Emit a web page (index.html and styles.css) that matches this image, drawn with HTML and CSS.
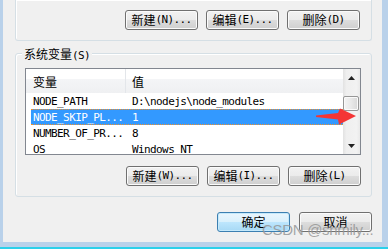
FILE: index.html
```html
<!DOCTYPE html>
<html lang="zh-CN">
<head>
    <meta charset="UTF-8">
    <title>环境变量</title>
    <link rel="stylesheet" href="styles.css">
</head>
<body>
    <div class="screen">
        <div class="window">
            <div class="group group-top">
                <div class="btn-row">
                    <button class="btn"><span class="zh">新建</span>(N)...</button>
                    <button class="btn"><span class="zh">编辑</span>(E)...</button>
                    <button class="btn"><span class="zh">删除</span>(D)</button>
                </div>
            </div>

            <fieldset class="group">
                <legend><span class="zh">系统变量</span>(S)</legend>
                <div class="list">
                    <div class="list-main">
                        <div class="list-head">
                            <div class="hcol hcol-name zh">变量</div>
                            <div class="hcol zh">值</div>
                        </div>
                        <div class="row">
                            <span class="cell-name">NODE_PATH</span>
                            <span class="cell-value">D:\nodejs\node_modules</span>
                        </div>
                        <div class="row selected">
                            <span class="cell-name">NODE_SKIP_PL...</span>
                            <span class="cell-value">1</span>
                        </div>
                        <div class="row">
                            <span class="cell-name">NUMBER_OF_PR...</span>
                            <span class="cell-value">8</span>
                        </div>
                        <div class="row">
                            <span class="cell-name">OS</span>
                            <span class="cell-value">Windows_NT</span>
                        </div>
                    </div>
                    <div class="scrollbar">
                        <div class="sb-btn">
                            <svg width="7" height="4" viewBox="0 0 7 4"><polygon points="3.5,0 7,4 0,4" fill="#222"/></svg>
                        </div>
                        <div class="sb-track">
                            <div class="sb-thumb"></div>
                        </div>
                        <div class="sb-btn">
                            <svg width="7" height="4" viewBox="0 0 7 4"><polygon points="0,0 7,0 3.5,4" fill="#222"/></svg>
                        </div>
                    </div>
                </div>
                <div class="btn-row btn-row-low">
                    <button class="btn"><span class="zh">新建</span>(W)...</button>
                    <button class="btn"><span class="zh">编辑</span>(I)...</button>
                    <button class="btn"><span class="zh">删除</span>(L)</button>
                </div>
            </fieldset>

            <div class="dialog-buttons">
                <button class="btn btn-default"><span class="zh">确定</span></button>
                <button class="btn"><span class="zh">取消</span></button>
            </div>
        </div>

        <!-- annotation arrow pasted on top of the screenshot -->
        <svg class="arrow" width="388" height="249" viewBox="0 0 388 249">
            <polygon points="316,115.5 338,113 340,108.5 356,116 339,124.5 338,119.5 316,117" fill="#f43535"/>
        </svg>
        <div class="watermark">CSDN @shmily...</div>
    </div>
</body>
</html>
```

FILE: styles.css
```css
* {
    box-sizing: border-box;
}
html, body {
    margin: 0;
    padding: 0;
}
body {
    width: 388px;
    height: 249px;
    overflow: hidden;
    background-color: #f0f0f0;
    font-family: "DejaVu Sans Mono", "Noto Sans CJK SC", monospace;
    font-size: 11px;
    letter-spacing: -0.6px;
    color: #000000;
}
.zh {
    font-family: "Noto Sans CJK SC", sans-serif;
    font-size: 12px;
    letter-spacing: 0;
}
.screen {
    position: relative;
    height: 249px;
    border-bottom: 2px solid #2cd0ea;
}
.window {
    height: 247px;
    background-color: #f0f0f0;
    border-left: 3px solid #b9d1ea;
    border-right: 6px solid #b9d1ea;
    border-bottom: 5px solid #b9d1ea;
    padding: 0 10px 0 12px;
    display: flex;
    flex-direction: column;
}

/* group boxes */
.group {
    border: 1px solid #d5dfe5;
    border-radius: 3px;
    box-shadow: inset 1px 1px 0 #ffffff;
}
.group-top {
    height: 41px;
    border-top: none;
    border-radius: 0 0 3px 3px;
    padding: 10px 11px 0 0;
}
fieldset.group {
    margin: 6px 0 0 0;
    padding: 8px 10px 10px 9px;
    min-width: 0;
}
fieldset.group legend {
    margin-left: -3px;
    padding: 0 2px;
    line-height: 13px;
    height: 13px;
    background-color: #f0f0f0;
}

/* buttons */
.btn-row {
    display: flex;
    justify-content: flex-end;
    gap: 8px;
}
.btn-row-low {
    margin-top: 11px;
}
.btn {
    width: 73px;
    height: 20px;
    padding: 0;
    margin: 0;
    border: 1px solid #707070;
    border-radius: 3px;
    background: linear-gradient(to bottom, #f2f2f2 0%, #ebebeb 50%, #dddddd 50%, #cfcfcf 100%);
    box-shadow: inset 0 0 0 1px #fbfbfb;
    font-family: "DejaVu Sans Mono", "Noto Sans CJK SC", monospace;
    font-size: 11px;
    letter-spacing: -0.6px;
    line-height: 18px;
    color: #000000;
    display: flex;
    align-items: center;
    justify-content: center;
}
.btn-default {
    border-color: #3c7fb1;
    background: linear-gradient(to bottom, #eaf6fd 0%, #d9f0fc 50%, #bee6fd 50%, #a7d9f5 100%);
    box-shadow: inset 0 0 0 1px #c5e9fb;
}
.dialog-buttons {
    display: flex;
    justify-content: flex-end;
    gap: 9px;
    margin-top: 15px;
}

/* list view */
.list {
    height: 87px;
    border: 1px solid #828790;
    background-color: #ffffff;
    display: flex;
    overflow: hidden;
}
.list-main {
    flex: 1;
    overflow: hidden;
}
.list-head {
    height: 24px;
    display: flex;
    background: linear-gradient(to bottom, #ffffff 0%, #ffffff 40%, #f4f5f7 40%, #eff0f2 100%);
}
.hcol {
    line-height: 24px;
    padding: 1px 0 0 6px;
}
.hcol-name {
    width: 100px;
    padding-left: 7px;
    border-right: 1px solid #e3e6ea;
}
.row {
    height: 16px;
    line-height: 17px;
    margin-left: 5px;
    display: flex;
    white-space: nowrap;
    overflow: hidden;
}
.cell-name {
    width: 94px;
    padding-left: 2px;
}
.cell-value {
    padding-left: 7px;
}
.row.selected {
    background-color: #3399ff;
    color: #ffffff;
    border-top: 1px dotted #f0902a;
    border-bottom: 1px dotted #f0902a;
    line-height: 15px;
}

/* scrollbar */
.scrollbar {
    width: 17px;
    display: flex;
    flex-direction: column;
    background: linear-gradient(to right, #e2e2e2 0%, #efefef 20%, #f2f2f2 80%, #e9e9e9 100%);
}
.sb-btn {
    height: 17px;
    display: flex;
    align-items: center;
    justify-content: center;
}
.sb-btn svg {
    display: block;
}
.sb-track {
    flex: 1;
    padding: 10px 1px 0 0;
}
.sb-thumb {
    height: 15px;
    border: 1px solid #979797;
    border-radius: 2px;
    background: linear-gradient(to right, #f4f4f4 0%, #e9e9e9 50%, #d8d8d8 100%);
    box-shadow: inset 0 0 0 1px #fafafa;
}

/* overlays */
.arrow {
    position: absolute;
    left: 0;
    top: 0;
}
.watermark {
    position: absolute;
    left: 262px;
    top: 221px;
    font-family: "Liberation Sans", Arial, sans-serif;
    font-size: 15px;
    letter-spacing: -0.3px;
    color: rgba(150, 150, 150, 0.85);
    white-space: nowrap;
}
```
